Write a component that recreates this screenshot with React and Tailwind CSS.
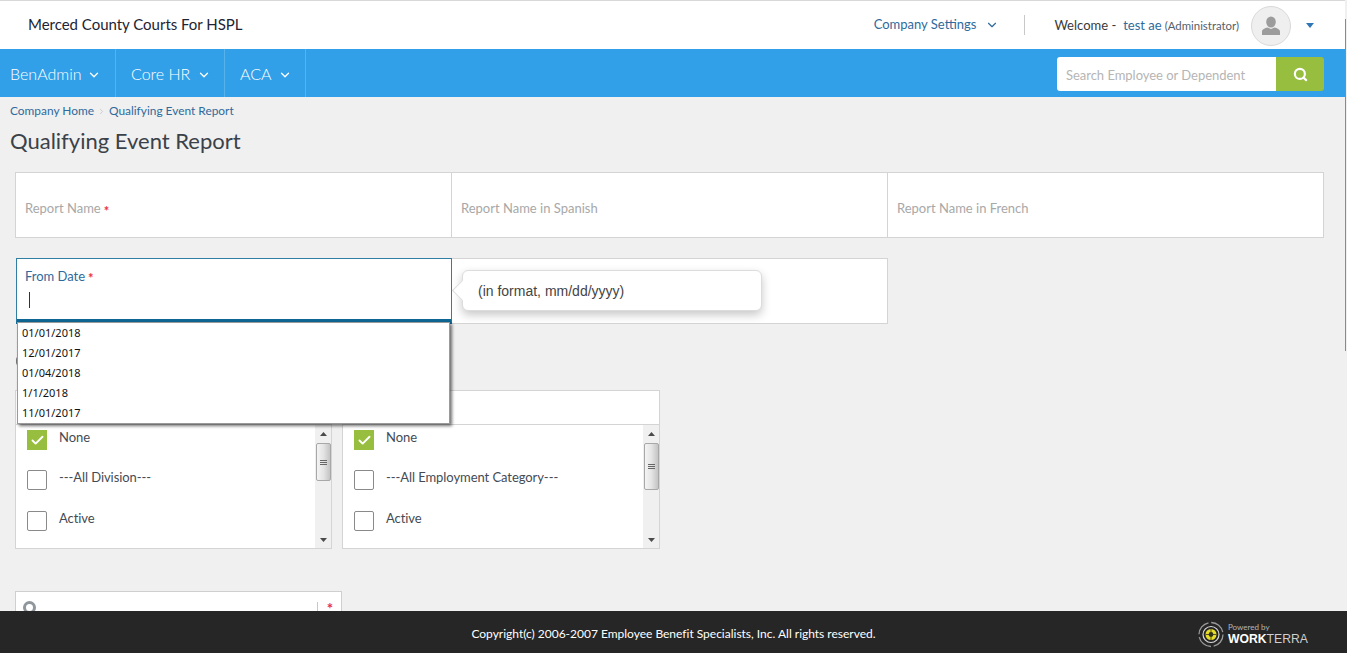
import React from "react";
import { ChevronDown, Search, Check, ChevronRight } from "lucide-react";

const Star = () => <span className="text-[#e8313f] text-[13px] font-bold ml-[3px] leading-none relative top-[2px]">*</span>;

function Logo() {
  return (
    <svg width="28" height="27" viewBox="0 0 28 27" className="shrink-0">
      <circle cx="14" cy="13.5" r="12" fill="none" stroke="#9a9a9a" strokeWidth="1.3" strokeDasharray="16 2.8" />
      <circle cx="14" cy="13.5" r="8" fill="none" stroke="#d8d8d8" strokeWidth="1.2" />
      <circle cx="14" cy="13.5" r="5.5" fill="#e6dc2a" />
      <circle cx="14" cy="13.5" r="2.4" fill="#33331a" />
      <path d="M14 8v11M8.500 13.500h11" stroke="#33331a" strokeWidth="0.8" />
    </svg>
  );
}

function ScrollArrow({ up }) {
  return (
    <svg width="7" height="4" viewBox="0 0 7 4" className="shrink-0">
      <path d={up ? "M0 4L3.500 0L7 4z" : "M0 0L3.500 4L7 0z"} fill="#4a4a4a" />
    </svg>
  );
}

function CheckRow({ label, checked, rowClass }) {
  return (
    <div className={`flex items-start ${rowClass}`}>
      {checked ? (
        <span className="w-5 h-5 bg-[#97be3e] flex items-center justify-center shrink-0">
          <Check size={15} strokeWidth={3} className="text-white" />
        </span>
      ) : (
        <span className="w-5 h-5 bg-white border border-[#8a8a8a] rounded-[2px] shrink-0" />
      )}
      <span className="ml-[12px] -mt-[2px] text-[13px] leading-[18px] tracking-[-0.07px] text-[#444b54]">{label}</span>
    </div>
  );
}

function ListPanel({ width, label, thumbH }) {
  return (
    <div className={`${width} shrink-0`}>
      <div className="h-[35px] bg-white border border-[#d4d4d4]" />
      <div className="h-[124px] bg-white border border-t-0 border-[#d4d4d4] flex">
        <div className="flex-1 pl-[11px] pt-[5px] min-w-0">
          <CheckRow label="None" checked rowClass="h-[40px]" />
          <CheckRow label={label} rowClass="h-[41px]" />
          <CheckRow label="Active" rowClass="h-[41px]" />
        </div>
        <div className="w-[16px] bg-[#f0f0f0] flex flex-col items-center shrink-0">
          <div className="mt-[7px] h-[4px] flex"><ScrollArrow up /></div>
          <div className={`w-[15px] ${thumbH} mt-[7px] rounded-[2px] border border-[#a8a8a8] bg-gradient-to-r from-[#f4f4f4] via-[#e4e4e4] to-[#c4c4c4] flex flex-col items-center justify-center gap-[1px]`}>
            <span className="w-[7px] h-px bg-[#666]" />
            <span className="w-[7px] h-px bg-[#666]" />
            <span className="w-[7px] h-px bg-[#666]" />
          </div>
          <div className="mt-auto mb-[6px] h-[4px] flex"><ScrollArrow /></div>
        </div>
      </div>
    </div>
  );
}

const navItem = "h-full flex items-center border-r border-[#57b2ec] pt-[2px]";

export default function App() {
  return (
    <div className="h-[653px] w-full overflow-hidden flex flex-col bg-[#f0f0f0] relative font-['Lato',sans-serif]">
      {/* header */}
      <header className="h-[49px] w-[1345px] shrink-0 bg-white border-t border-[#d8d8d8] flex items-center pr-[31px]">
        <div className="ml-[28px] -mt-[1px] text-[15px] tracking-[-0.02px] text-[#1d2433]">Merced County Courts For HSPL</div>
        <div className="ml-auto flex items-center">
          <span className="text-[13px] text-[#2f6a9c]">Company Settings</span>
          <ChevronDown size={14} className="ml-[9px] -mt-[1px] text-[#2f6a9c]" />
          <span className="w-px h-[20px] bg-[#c8c8c8] ml-[25px] -mt-[1px]" />
          <span className="ml-[29px] mt-[2px] text-[13px] text-[#3a3a3a]">Welcome -</span>
          <span className="ml-[7px] mt-[2px] text-[13px] text-[#2f6a9c]">test ae</span>
          <span className="ml-[3px] mt-[2px] text-[11.4px] text-[#55606c]">(Administrator)</span>
          <span className="ml-[12px] mt-[1px] w-[40px] h-[40px] rounded-full bg-[#efefef] border border-[#d9d9d9] flex items-center justify-center">
            <svg width="20" height="20" viewBox="0 0 20 20">
              <ellipse cx="10" cy="6" rx="4.800" ry="5.500" fill="#9c9c9c" />
              <path d="M1 19v-3.500c0-2 3-3.500 5.500-4l3.500 1.500 3.500-1.500c2.500.5 5.500 2 5.500 4V19z" fill="#9c9c9c" />
            </svg>
          </span>
          <svg width="8" height="5" viewBox="0 0 8 5" className="ml-[15px]">
            <path d="M0 0h8L4 5z" fill="#2f76b5" />
          </svg>
        </div>
      </header>

      {/* nav */}
      <nav className="h-[48px] w-[1345px] shrink-0 bg-[#31a0e8] flex items-center pr-[21px]">
        <div className={`${navItem} pl-[10px] w-[116px]`}>
          <span className="text-[16px] text-white font-light">BenAdmin</span>
          <ChevronDown size={14} strokeWidth={2.2} className="ml-[5px] mt-[1px] text-white" />
        </div>
        <div className={`${navItem} pl-[15px] w-[109px]`}>
          <span className="text-[16px] text-white font-light">Core HR</span>
          <ChevronDown size={14} strokeWidth={2.2} className="ml-[7px] mt-[1px] text-white" />
        </div>
        <div className={`${navItem} pl-[15px] w-[81px]`}>
          <span className="text-[16px] text-white font-light">ACA</span>
          <ChevronDown size={14} strokeWidth={2.2} className="ml-[6px] mt-[1px] text-white" />
        </div>
        <div className="ml-auto mt-[2px] flex w-[267px] h-[34px] rounded-[3px] overflow-hidden">
          <div className="w-[219px] bg-white flex items-center pl-[9px] pt-[3px] text-[13px] tracking-[-0.03px] text-[#b5b5b5]">Search Employee or Dependent</div>
          <div className="flex-1 bg-[#97be3e] flex items-center justify-center">
            <Search size={15} strokeWidth={3.5} className="text-white" />
          </div>
        </div>
      </nav>

      {/* main */}
      <main className="flex-1 min-h-0 overflow-hidden relative pr-[2px]">
        <div className="pl-[10px] pt-[6px] flex items-center h-[22px] text-[11.9px] text-[#2f6a9c]">
          <span>Company Home</span>
          <ChevronRight size={9} className="mx-[3px] text-[#c0c0c0]" />
          <span>Qualifying Event Report</span>
        </div>
        <h1 className="pl-[10px] mt-[7px] text-[22px] leading-[30px] font-normal text-[#3b4148]">Qualifying Event Report</h1>

        <div className="ml-[15px] mt-[16px] w-[1309px] h-[66px] flex bg-white border border-[#d4d4d4] text-[13px] text-[#a8a8a8]">
          <div className="w-[436px] shrink-0 flex items-center pl-[9px] pt-[8px] border-r border-[#d4d4d4]">Report Name<Star /></div>
          <div className="w-[436px] shrink-0 flex items-center pl-[9px] pt-[8px] border-r border-[#d4d4d4]">Report Name in Spanish</div>
          <div className="flex-1 flex items-center pl-[9px] pt-[8px]">Report Name in French</div>
        </div>

        <div className="ml-[16px] mt-[20px] w-[872px] h-[66px] relative flex bg-white border border-[#d4d4d4]">
          <div className="w-[436px] -my-px -ml-px h-[66px] shrink-0 border border-[#2f7fa3] border-b-[5px] border-b-[#0e6693] pl-[8px] pt-[8px] relative z-10 bg-white">
            <div className="text-[13px] leading-[18px] tracking-[-0.03px] text-[#2f6a9c]">From Date<Star /></div>
            <div className="ml-[4px] mt-[7px] w-px h-[16px] bg-[#333]" />
          </div>
          {/* tooltip */}
          <div className="absolute left-[445px] top-[11px] w-[300px] h-[41px] bg-white border border-[#dcdcdc] rounded-[6px] shadow-[0_4px_10px_rgba(0,0,0,0.22)] flex items-center pl-[15px] pt-[1px] text-[14px] text-[#444] font-['Liberation_Sans',sans-serif] z-20">
            <span className="absolute -left-[8px] top-[12px] w-[15px] h-[15px] bg-white border-l border-b border-[#dcdcdc] rotate-45" />
            <span className="relative">(in format, mm/dd/yyyy)</span>
          </div>
        </div>

        {/* dropdown */}
        <div className="absolute left-[17px] top-[225px] w-[433px] h-[102px] z-30 bg-white border border-[#9a9a9a] shadow-[2px_2px_3px_rgba(0,0,0,0.55)] pl-[4px] text-[11px] leading-[20px] text-[#111] font-['Noto_Sans',sans-serif]">
          <div>01/01/2018</div>
          <div>12/01/2017</div>
          <div>01/04/2018</div>
          <div>1/1/2018</div>
          <div>11/01/2017</div>
        </div>

        {/* sliver of a label hidden behind the dropdown */}
        <div className="ml-[16px] mt-[32px] w-[4px] h-[10px] rounded-l-full border-l border-[#777]" />

        <div className="ml-[15px] mt-[24px] flex gap-[10px]">
          <ListPanel width="w-[317px]" label="---All Division---" thumbH="h-[38px]" />
          <ListPanel width="w-[318px]" label="---All Employment Category---" thumbH="h-[47px]" />
        </div>

        <div className="ml-[15px] mt-[42px] w-[327px] h-[40px] bg-white border border-[#cfcfcf] border-b-0 relative flex">
          <span className="ml-[7px] mt-[9px] w-[13px] h-[13px] rounded-full border-[3px] border-[#8f969c]" />
          <span className="absolute right-[23px] top-[10px] w-px h-[20px] bg-[#c8c8c8]" />
          <span className="absolute right-[8px] top-[12px] text-[#e8313f] text-[15px] font-bold leading-[9px]">*</span>
        </div>
      </main>

      {/* footer */}
      <footer className="h-[42px] shrink-0 bg-[#262626] flex items-center relative z-40">
        <div className="flex-1 text-center text-[12px] tracking-[-0.01px] text-white pt-[3px]">Copyright(c) 2006-2007 Employee Benefit Specialists, Inc. All rights reserved.</div>
        <div className="absolute left-[1197px] top-[10px] flex items-center gap-[3px]">
          <Logo />
          <div className="flex flex-col">
            <span className="text-[8px] leading-[9px] text-[#b5b5b5]">Powered by</span>
            <span className="mt-[1px] text-[12.2px] leading-[13px] text-white font-['Liberation_Sans',sans-serif]"><b>WORK</b><span className="text-[#cfcfcf]">TERRA</span></span>
          </div>
        </div>
      </footer>

      {/* page scrollbar */}
      <div className="absolute left-[1345px] top-[19px] w-px h-[332px] bg-[#8a8a8a] z-50" />
    </div>
  );
}
